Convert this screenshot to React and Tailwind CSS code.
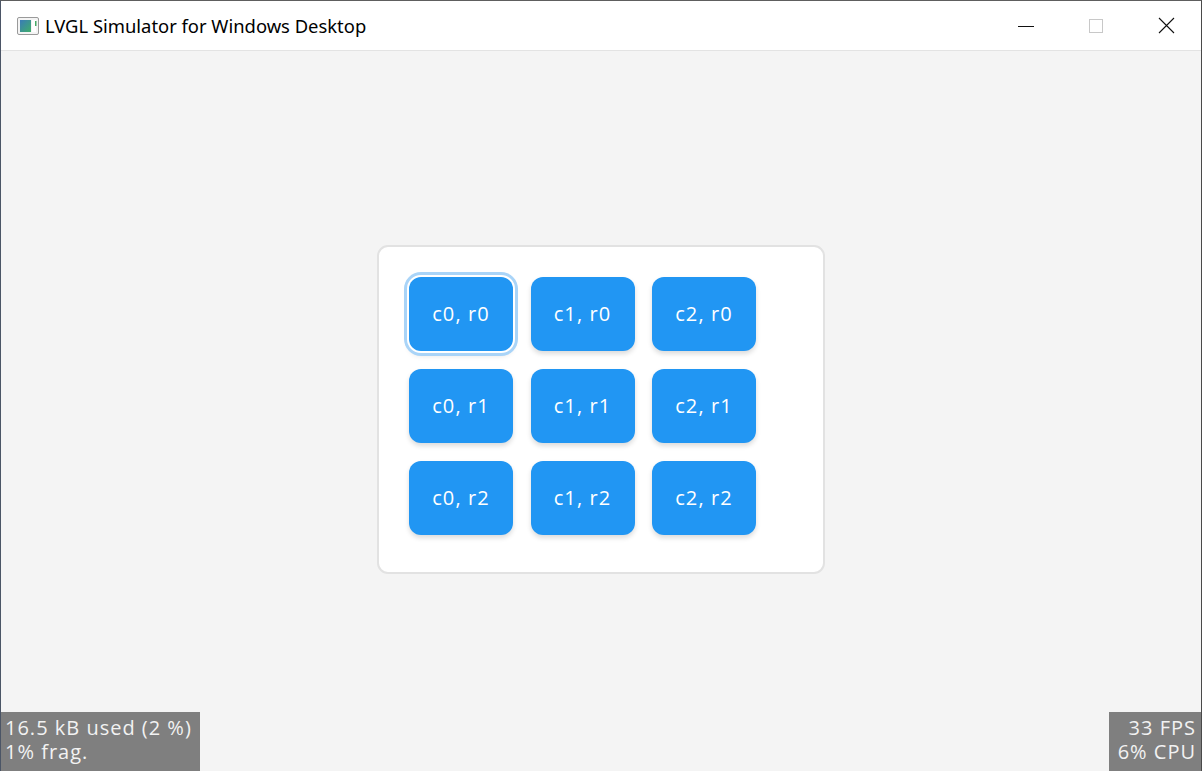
// App.jsx
import React from "react";

const cells = [
  ["c0, r0", "c1, r0", "c2, r0"],
  ["c0, r1", "c1, r1", "c2, r1"],
  ["c0, r2", "c1, r2", "c2, r2"],
];

function AppIcon() {
  return (
    <svg width="22" height="18" viewBox="0 0 22 18">
      <defs>
        <linearGradient id="ico" x1="0" y1="0" x2="1" y2="1">
          <stop offset="0" stopColor="#3a7bb8" />
          <stop offset="1" stopColor="#3fae6a" />
        </linearGradient>
      </defs>
      <rect x="0.5" y="0.5" width="21" height="17" rx="1.5" fill="#f4f4f4" stroke="#9a9a9a" />
      <rect x="3" y="3" width="11" height="12" fill="url(#ico)" />
      <rect x="15" y="3" width="4" height="12" fill="#ffffff" />
      <rect x="18" y="4" width="1.5" height="5" fill="#45a865" />
    </svg>
  );
}

function TitleBar() {
  return (
    <div className="flex h-[50px] items-center bg-white border-b border-[#e3e3e3]">
      <div className="ml-[16px] flex items-center">
        <AppIcon />
      </div>
      <span
        className="ml-[6px] text-[18.4px] text-black"
        style={{ fontFamily: '"Noto Sans", "Liberation Sans", sans-serif' }}
      >
        LVGL Simulator for Windows Desktop
      </span>
      <div className="ml-auto flex h-full items-center">
        {/* minimise */}
        <div className="flex h-full w-[70px] items-center justify-center">
          <svg width="16" height="16" viewBox="0 0 16 16">
            <line x1="0" y1="8.5" x2="16" y2="8.5" stroke="#111" strokeWidth="1" />
          </svg>
        </div>
        {/* maximise (disabled) */}
        <div className="flex h-full w-[70px] items-center justify-center">
          <svg width="16" height="16" viewBox="0 0 16 16">
            <rect x="1.5" y="1.5" width="13" height="13" fill="none" stroke="#c8c8c8" strokeWidth="1" />
          </svg>
        </div>
        {/* close */}
        <div className="flex h-full w-[70px] items-center justify-center">
          <svg width="17" height="17" viewBox="0 0 17 17">
            <path d="M1 1 L16 16 M16 1 L1 16" stroke="#111" strokeWidth="1.1" />
          </svg>
        </div>
      </div>
    </div>
  );
}

function GridButton({ label, focused }) {
  return (
    <div
      className={`flex h-[74px] w-[104px] items-center justify-center rounded-[12px] bg-[#2196f3] text-[20px] tracking-[1.1px] text-white ${
        focused
          ? "shadow-[0_0_0_2px_#ffffff,0_0_0_5px_#a9d4f8,0_4px_6px_rgba(0,0,0,0.14)]"
          : "shadow-[0_3px_5px_rgba(0,0,0,0.14)]"
      }`}
    >
      {label}
    </div>
  );
}

export default function App() {
  const font = { fontFamily: '"Open Sans", "Noto Sans", sans-serif' };
  return (
    <div className="h-[771px] w-[1202px] overflow-hidden border-t border-l border-r border-t-[#5e5e5e] border-l-[#4b5566] border-r-[#4a4a4a] bg-white">
      <TitleBar />
      <div className="relative flex h-[720px] items-center justify-center bg-[#f4f4f4]" style={font}>
        <div className="mb-[4px] h-[329px] w-[448px] rounded-[11px] border-2 border-[#e2e2e2] bg-white p-[30px]">
          <div className="grid grid-cols-[104px_104px_104px] gap-x-[17.5px] gap-y-[18px]">
            {cells.map((row, r) =>
              row.map((label, c) => (
                <GridButton key={label} label={label} focused={r === 0 && c === 0} />
              ))
            )}
          </div>
        </div>

        {/* memory monitor */}
        <div className="absolute bottom-0 left-0 h-[59px] w-[199px] bg-[#7f7f7f] pl-[4px] pt-[4px] text-[20px] leading-[24px] tracking-[1px] text-[#f2f2f2]">
          <div>16.5 kB used (2 %)</div>
          <div>1% frag.</div>
        </div>

        {/* perf monitor */}
        <div className="absolute bottom-0 right-0 h-[59px] w-[92px] bg-[#7f7f7f] pr-[5px] pt-[4px] text-right text-[20px] leading-[24px] tracking-[1px] text-[#f2f2f2]">
          <div>33 FPS</div>
          <div>6% CPU</div>
        </div>
      </div>
    </div>
  );
}
